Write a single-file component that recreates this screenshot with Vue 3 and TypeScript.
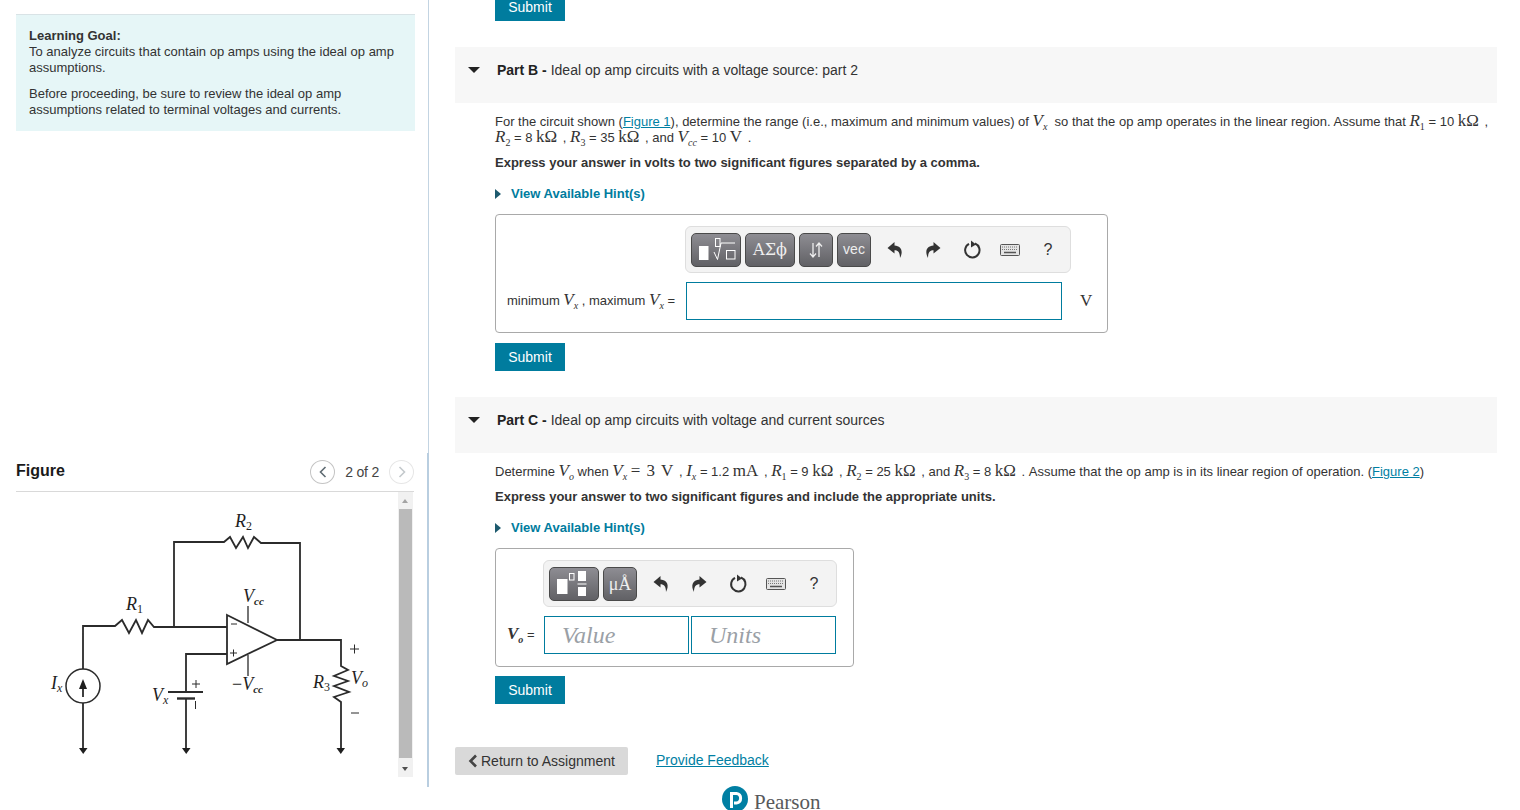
<template>
  <div class="page">
    <aside class="left">
      <div class="goal">
        <div><b>Learning Goal:</b></div>
        <div>To analyze circuits that contain op amps using the ideal op amp assumptions.</div>
        <p>Before proceeding, be sure to review the ideal op amp assumptions related to terminal voltages and currents.</p>
      </div>

      <div class="figure-head">
        <h2>Figure</h2>
        <div class="pager">
          <button class="nav">
            <svg width="10" height="12" viewBox="0 0 10 12"><path d="M7.5 1 L2.5 6 L7.5 11" fill="none" stroke="#5f6b72" stroke-width="1.6" /></svg>
          </button>
          <span>2 of 2</span>
          <button class="nav off">
            <svg width="10" height="12" viewBox="0 0 10 12"><path d="M2.5 1 L7.5 6 L2.5 11" fill="none" stroke="#c4c9cc" stroke-width="1.6" /></svg>
          </button>
        </div>
      </div>

      <div class="figure-body">
        <svg class="circuit" width="382" height="285" viewBox="16 493 382 285">
          <g fill="none" stroke="#2b2b2b" stroke-width="1.800" stroke-linejoin="miter">
            <path d="M174 627 V543 H224 L230 538 L236 549 L243 538 L248 549 L254 538 L261 544 H300 V641" />
            <path d="M83 670 V627 H115 L122 621 L129 634 L136 621 L142 634 L148 621 L154 628 H227" />
            <path d="M227 616 L277 641 L227 665 Z" />
            <path d="M248 607 V624 M248 656 V677" stroke-width="1.300" />
            <path d="M227 655 H186 V693" />
            <path d="M168 693 H203" />
            <path d="M177 699.500 H195" stroke-width="2.400" />
            <path d="M186 700 V749" />
            <path d="M277 641 H341 V667 L348 671 L334 677 L348 682 L334 687 L349 693 L334 698 L341 703 V749" />
            <circle cx="83" cy="687" r="17" stroke-width="1.500" />
            <path d="M83 704 V749 M83 690 V698" />
            <path d="M231 625 H237 M230 654 H237 M233.500 650.500 V657.500" stroke-width="1" />
            <path d="M350 650 H359 M354.500 645.500 V654.500 M351 714 H359 M192 685 H200 M196 681 V689 M195.500 702 V710" stroke-width="1" />
          </g>
          <g fill="#1f1f1f">
            <path d="M83 680 L79 690 H87 Z" />
            <path d="M79 749 H87.500 L83.200 755 Z" />
            <path d="M182 749 H190.500 L186.200 755 Z" />
            <path d="M336.500 749 H345 L340.800 755 Z" />
          </g>
          <g class="lbl">
            <text x="235" y="528">R<tspan class="s n" dy="3">2</tspan></text>
            <text x="126" y="611">R<tspan class="s n" dy="3">1</tspan></text>
            <text x="243" y="603">V<tspan class="s cc" dy="3">cc</tspan></text>
            <text x="232" y="691"><tspan font-style="normal">−</tspan>V<tspan class="s cc" dy="3">cc</tspan></text>
            <text x="51" y="690">I<tspan class="s" dy="3">x</tspan></text>
            <text x="152" y="702">V<tspan class="s" dy="3">x</tspan></text>
            <text x="313" y="689">R<tspan class="s n" dy="3">3</tspan></text>
            <text x="351" y="685">V<tspan class="s" dy="3">o</tspan></text>
          </g>
        </svg>
        <div class="scrollbar">
          <span class="up"></span>
          <span class="thumb"></span>
          <span class="down"></span>
        </div>
      </div>
    </aside>

    <main class="right">
      <button class="submit first">Submit</button>

      <section class="part part-b">
        <header class="part-head"><span class="caret"></span><b>Part B -</b>&nbsp;Ideal op amp circuits with a voltage source: part 2</header>
        <div class="part-body">
          <p class="q">
            For the circuit shown (<a href="#">Figure 1</a>), determine the range (i.e., maximum and minimum values) of
            <i class="m">V<sub>x</sub></i>&nbsp; so that the op amp operates in the linear region. Assume that
            <i class="m">R<sub class="n">1</sub></i> = 10 <span class="u">kΩ</span> ,
            <i class="m">R<sub class="n">2</sub></i> = 8 <span class="u">kΩ</span> , <i class="m">R<sub class="n">3</sub></i> = 35 <span class="u">kΩ</span> , and
            <i class="m">V<sub>cc</sub></i> = 10 <span class="u">V</span> .
          </p>
          <p class="ins">Express your answer in volts to two significant figures separated by a comma.</p>
          <div class="hint"><span class="tri"></span>View Available Hint(s)</div>

          <div class="answer answer-b">
            <div class="tools-row">
              <div class="toolbar">
                <span class="tb">
                  <svg width="48" height="32" viewBox="1 1 48 32">
                    <rect x="8" y="13" width="9.500" height="14" fill="#fff" />
                    <rect x="24.500" y="5.500" width="4.500" height="8" fill="none" stroke="#fff" />
                    <path d="M23 19 L26.500 26.500 L30 10 H44" fill="none" stroke="#fff" />
                    <rect x="35.500" y="17.500" width="8.500" height="8.500" fill="none" stroke="#fff" />
                  </svg>
                </span>
                <span class="tb serif">ΑΣϕ</span>
                <span class="tb narrow">
                  <svg width="16" height="18" viewBox="0 0 16 18" fill="none" stroke="#eee" stroke-width="1.300">
                    <path d="M5 2 V16 M2 12.500 L5 16 L8 12.500 M11 16 V2 M8 5.500 L11 2 L14 5.500" />
                  </svg>
                </span>
                <span class="tb narrow vec">vec</span>
                <span class="acts acts-b">
                  <svg class="ic" width="20" height="20" viewBox="0 0 20 20"><path d="M9.500 2 L2.500 8 L9.500 13.500 V10.300 C13 10.300 15 12.500 15 18 C18.500 11.500 16.500 6 9.500 5.500 Z" fill="#333" /></svg>
                  <svg class="ic" width="20" height="20" viewBox="0 0 20 20"><path d="M10.500 2 L17.500 8 L10.500 13.500 V10.300 C7 10.300 5 12.500 5 18 C1.500 11.500 3.500 6 10.500 5.500 Z" fill="#333" /></svg>
                  <svg class="ic" width="20" height="20" viewBox="0 0 20 20"><path d="M7 3.800 A7.200 7.200 0 1 0 13 3.500" fill="none" stroke="#333" stroke-width="2" /><path d="M9 .5 L14 4.500 L9 7.500 Z" fill="#333" /></svg>
                  <svg class="ic" width="20" height="20" viewBox="0 0 20 12"><rect x=".5" y=".5" width="19" height="11" rx="1" fill="#e4e4e4" stroke="#555" /><path d="M2 3 H18 M2 5.500 H18" stroke="#777" stroke-dasharray="1 1" /><path d="M4 8.500 H16" stroke="#555" stroke-width="1.500" /></svg>
                  <span class="help">?</span>
                </span>
              </div>
            </div>
            <div class="input-row">
              <span class="ans-label">minimum <i class="m">V<sub>x</sub></i> , maximum <i class="m">V<sub>x</sub></i> =</span>
              <div class="field wide"></div>
              <span class="unit">V</span>
            </div>
          </div>
          <button class="submit">Submit</button>
        </div>
      </section>

      <section class="part part-c">
        <header class="part-head"><span class="caret"></span><b>Part C -</b>&nbsp;Ideal op amp circuits with voltage and current sources</header>
        <div class="part-body">
          <p class="q">
            Determine <i class="m">V<sub>o</sub></i> when <i class="m">V<sub>x</sub></i> <span class="u wide-eq">= 3 V</span> ,
            <i class="m">I<sub>x</sub></i> = 1.2 <span class="u">mA</span> ,
            <i class="m">R<sub class="n">1</sub></i> = 9 <span class="u">kΩ</span> ,
            <i class="m">R<sub class="n">2</sub></i> = 25 <span class="u">kΩ</span> , and
            <i class="m">R<sub class="n">3</sub></i> = 8 <span class="u">kΩ</span> . Assume that the op amp is in its linear region of operation. (<a href="#">Figure 2</a>)
          </p>
          <p class="ins">Express your answer to two significant figures and include the appropriate units.</p>
          <div class="hint"><span class="tri"></span>View Available Hint(s)</div>

          <div class="answer answer-c">
            <div class="tools-row">
              <div class="toolbar short">
                <span class="tb">
                  <svg width="48" height="32" viewBox="1 1 48 32" fill="#fff">
                    <rect x="8" y="12" width="10.500" height="15" />
                    <rect x="20.500" y="6.500" width="4.500" height="6.500" fill="none" stroke="#fff" />
                    <rect x="29" y="4" width="8" height="10" />
                    <rect x="28.500" y="16.500" width="9" height="1" />
                    <rect x="29" y="20" width="8" height="9" />
                  </svg>
                </span>
                <span class="tb narrow serif mu">μÅ</span>
                <span class="acts acts-c">
                  <svg class="ic" width="20" height="20" viewBox="0 0 20 20"><path d="M9.500 2 L2.500 8 L9.500 13.500 V10.300 C13 10.300 15 12.500 15 18 C18.500 11.500 16.500 6 9.500 5.500 Z" fill="#333" /></svg>
                  <svg class="ic" width="20" height="20" viewBox="0 0 20 20"><path d="M10.500 2 L17.500 8 L10.500 13.500 V10.300 C7 10.300 5 12.500 5 18 C1.500 11.500 3.500 6 10.500 5.500 Z" fill="#333" /></svg>
                  <svg class="ic" width="20" height="20" viewBox="0 0 20 20"><path d="M7 3.800 A7.200 7.200 0 1 0 13 3.500" fill="none" stroke="#333" stroke-width="2" /><path d="M9 .5 L14 4.500 L9 7.500 Z" fill="#333" /></svg>
                  <svg class="ic" width="20" height="20" viewBox="0 0 20 12"><rect x=".5" y=".5" width="19" height="11" rx="1" fill="#e4e4e4" stroke="#555" /><path d="M2 3 H18 M2 5.500 H18" stroke="#777" stroke-dasharray="1 1" /><path d="M4 8.500 H16" stroke="#555" stroke-width="1.500" /></svg>
                  <span class="help">?</span>
                </span>
              </div>
            </div>
            <div class="input-row">
              <span class="ans-label vo"><i class="m bold">V<sub>o</sub></i> =</span>
              <div class="field ph">Value</div>
              <div class="field ph">Units</div>
            </div>
          </div>
          <button class="submit">Submit</button>
        </div>
      </section>

      <div class="footer-row">
        <button class="back">
          <svg width="10" height="14" viewBox="0 0 10 14"><path d="M8 1.500 L2.500 7 L8 12.500" fill="none" stroke="#444" stroke-width="2.600" /></svg>
          Return to Assignment
        </button>
        <a href="#" class="feedback">Provide Feedback</a>
      </div>
      <div class="brand">
        <svg width="26" height="26" viewBox="0 0 26 26">
          <circle cx="13" cy="13" r="13" fill="#007fa3" />
          <path d="M9.500 22 V7.500 H14.500 A4.800 4.800 0 0 1 14.500 17 H12" fill="none" stroke="#fff" stroke-width="3" />
        </svg>
        <span>Pearson</span>
      </div>
    </main>
  </div>
</template>

<script setup lang="ts">
</script>

<style>
html,
body {
  margin: 0;
  background: #fff;
  overflow: hidden;
}
</style>

<style scoped>
.page {
  display: flex;
  width: 1520px;
  height: 810px;
  overflow: hidden;
  font-family: "Liberation Sans", Arial, sans-serif;
  font-size: 13px;
  line-height: 16px;
  color: #333;
}

.left {
  position: relative;
  box-sizing: border-box;
  width: 429px;
  height: 787px;
  padding: 14px 14px 0 16px;
  border-right: 1px solid #c3d4e2;
  flex-shrink: 0;
}

.left::after {
  content: "";
  position: absolute;
  top: 453px;
  bottom: 0;
  right: -1px;
  width: 2px;
  background: #b9cee0;
}

.goal {
  box-sizing: border-box;
  height: 117px;
  margin-right: -1px;
  padding: 13px 13px 0;
  background: #e6f6f7;
  border-top: 1px solid #d9e3e6;
}

.goal p {
  margin: 10px 0 0;
}

.figure-head {
  display: flex;
  justify-content: space-between;
  align-items: flex-end;
  box-sizing: border-box;
  height: 44px;
  margin-top: 317px;
  padding-bottom: 7px;
  border-bottom: 1px solid #d9d9d9;
}

.figure-head h2 {
  margin: 0 0 4px;
  font-size: 16px;
  line-height: 18px;
  font-weight: 700;
  color: #1a1a1a;
}

.pager {
  display: flex;
  align-items: center;
  gap: 10px;
}

.pager span {
  font-size: 14px;
  color: #444;
  letter-spacing: -.2px;
}

.nav {
  display: flex;
  align-items: center;
  justify-content: center;
  box-sizing: border-box;
  width: 25px;
  height: 24px;
  padding: 0;
  border: 1px solid #c4c4c4;
  border-radius: 50%;
  background: #fff;
}

.nav.off {
  border-color: #e6e6e6;
}

.figure-body {
  display: flex;
  width: 397px;
  height: 285px;
}

.circuit {
  display: block;
}

.lbl text {
  font-family: "Liberation Serif", serif;
  font-style: italic;
  font-size: 18px;
  fill: #1f1f1f;
}

.lbl .s {
  font-size: 12px;
}

.lbl .n {
  font-style: normal;
}

.lbl .cc {
  font-weight: 700;
  font-size: 11px;
}

.scrollbar {
  position: relative;
  width: 15px;
  height: 285px;
  background: #f1f1f1;
}

.thumb {
  position: absolute;
  left: 1px;
  top: 17px;
  width: 13px;
  height: 249px;
  background: #bababa;
}

.up,
.down {
  position: absolute;
  left: 4px;
  width: 0;
  height: 0;
  border-left: 3.5px solid transparent;
  border-right: 3.5px solid transparent;
}

.up {
  top: 7px;
  border-bottom: 4px solid #a3a3a3;
}

.down {
  bottom: 6px;
  border-top: 4px solid #505050;
}

.right {
  box-sizing: border-box;
  width: 1068px;
  padding-left: 26px;
}

.submit {
  display: block;
  box-sizing: border-box;
  width: 70px;
  height: 28px;
  padding: 0;
  border: none;
  background: #007c9e;
  color: #fff;
  font-family: inherit;
  font-size: 14px;
}

.submit.first {
  margin: -7px 0 0 40px;
}

.part {
  width: 1042px;
}

.part-b {
  margin-top: 26px;
}

.part-c {
  margin-top: 26px;
}

.part-head {
  display: flex;
  align-items: center;
  box-sizing: border-box;
  height: 56px;
  padding-bottom: 10px;
  background: #f7f7f7;
  font-size: 14px;
  color: #333;
}

.part-head b {
  color: #222;
}

.caret {
  width: 0;
  height: 0;
  margin: 0 17px 0 13px;
  border-left: 6px solid transparent;
  border-right: 6px solid transparent;
  border-top: 6px solid #222;
}

.part-body {
  padding-left: 40px;
}

.q {
  margin: 11px 0 0;
  width: 1000px;
  line-height: 16px;
}

.q a,
.feedback {
  color: #007fa3;
}

.m {
  font-family: "Liberation Serif", serif;
  font-size: 17px;
  font-style: italic;
  line-height: 0;
}

.m sub {
  font-size: 10px;
  line-height: 0;
}

.m sub.n {
  font-style: normal;
}

.u {
  margin-right: 2px;
  font-family: "Liberation Serif", serif;
  font-size: 17px;
  line-height: 0;
}

.wide-eq {
  word-spacing: 2px;
}

.ins {
  margin: 9px 0 0;
  font-weight: 700;
}

.hint {
  display: flex;
  align-items: center;
  margin-top: 15px;
  color: #007c9e;
  font-weight: 700;
}

.tri {
  width: 0;
  height: 0;
  margin-right: 10px;
  border-top: 5px solid transparent;
  border-bottom: 5px solid transparent;
  border-left: 6px solid #1d5a6e;
}

.answer {
  box-sizing: border-box;
  margin-top: 12px;
  padding: 11px;
  border: 1px solid #a9a9a9;
  border-radius: 4px;
}

.answer-b {
  width: 613px;
  height: 119px;
}

.answer-c {
  width: 359px;
  height: 119px;
}

.answer + .submit {
  margin-top: 10px;
}

.answer-c + .submit {
  margin-top: 9px;
}

.tools-row {
  display: flex;
  padding-left: 178px;
}

.answer-c .tools-row {
  padding-left: 36px;
}

.toolbar {
  display: flex;
  align-items: center;
  gap: 4px;
  box-sizing: border-box;
  width: 386px;
  height: 47px;
  padding: 0 5px;
  background: #f3f3f3;
  border: 1px solid #dedede;
  border-radius: 6px;
}

.toolbar.short {
  width: 294px;
}

.tb {
  display: flex;
  align-items: center;
  justify-content: center;
  box-sizing: border-box;
  width: 50px;
  height: 34px;
  border: 1px solid #4a4a4a;
  border-radius: 5px;
  background: linear-gradient(#8e8d93, #616165);
  color: #eee;
}

.tb.narrow {
  width: 34px;
}

.serif {
  font-family: "DejaVu Serif", "Liberation Serif", serif;
  font-size: 16px;
}

.mu {
  font-family: "Liberation Serif", serif;
  font-size: 18px;
}

.vec {
  align-items: flex-start;
  padding-top: 7px;
  font-size: 14px;
}

.acts {
  display: flex;
  align-items: center;
  justify-content: space-between;
  width: 173px;
}

.acts-b,
.acts-c {
  margin-left: 10px;
}

.help {
  width: 20px;
  text-align: center;
  font-size: 16px;
  color: #333;
}

.input-row {
  display: flex;
  align-items: center;
  margin-top: 9px;
}

.ans-label {
  width: 179px;
  white-space: nowrap;
}

.ans-label.vo {
  width: 37px;
}

.bold {
  font-weight: 700;
}

.field {
  box-sizing: border-box;
  height: 38px;
  border: 1px solid #007c9e;
  background: #fff;
}

.field.wide {
  width: 376px;
}

.field.ph {
  width: 145px;
  margin-right: 2px;
  padding-left: 17px;
  font-family: "Liberation Serif", serif;
  font-size: 24px;
  font-style: italic;
  line-height: 36px;
  color: #9aa0a6;
}

.unit {
  margin-left: 18px;
  font-family: "Liberation Serif", serif;
  font-size: 17px;
  color: #333;
}

.footer-row {
  display: flex;
  align-items: center;
  gap: 28px;
  margin-top: 43px;
  font-size: 14px;
}

.back {
  display: flex;
  align-items: center;
  gap: 3px;
  box-sizing: border-box;
  width: 173px;
  height: 28px;
  padding: 0 0 0 13px;
  border: none;
  border-radius: 2px;
  background: #d9d9d9;
  color: #333;
  font-family: inherit;
  font-size: 14px;
}

.feedback {
  margin-bottom: 2px;
}

.brand {
  display: flex;
  align-items: flex-start;
  gap: 6px;
  margin: 11px 0 0 267px;
  font-family: "Liberation Serif", serif;
  font-size: 21px;
  line-height: 32px;
  color: #58595b;
}
</style>
